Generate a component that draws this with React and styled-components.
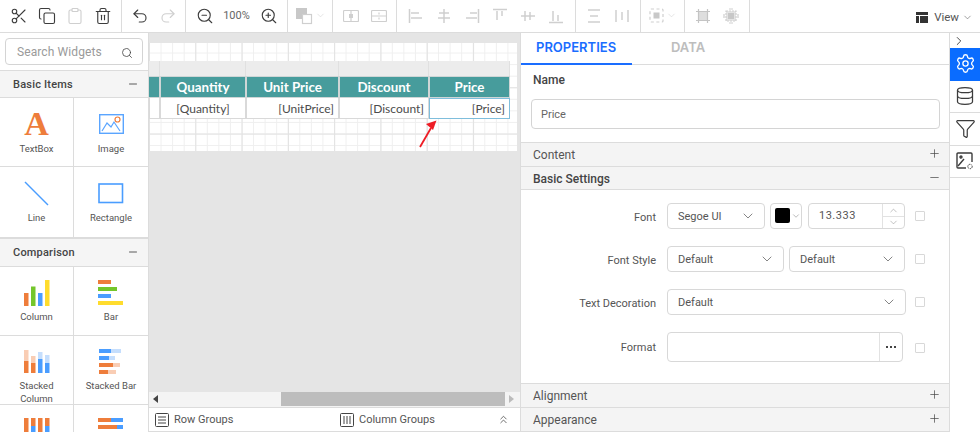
import React from 'react';
import styled, { createGlobalStyle } from 'styled-components';
import { Scissors, Copy, Clipboard, Trash2, Undo2, Redo2, ZoomIn, ZoomOut, Search, Settings, Database, Funnel, ChevronDown, ChevronUp, ChevronRight, ChevronsUp, Plus, Minus } from 'lucide-react';

const Global = createGlobalStyle`
  html, body { margin: 0; padding: 0; background: #fff; overflow: hidden; }
  * { box-sizing: border-box; }
  body { font-family: Roboto, "Liberation Sans", sans-serif; }
`;

const Page = styled.div`
  width: 980px; height: 432px; display: flex; flex-direction: column; overflow: hidden; color: #555;
`;
const Toolbar = styled.div`
  height: 33px; flex: none; display: flex; align-items: stretch; border-bottom: 1px solid #dcdcdc; background: #fff;
`;
const Group = styled.div`
  width: ${p => p.$w}px; flex: none; display: flex; align-items: center; justify-content: center;
  border-right: 1px solid #dcdcdc; padding-bottom: 1px;
`;
const Tool = styled.div`
  width: ${p => p.$w || 28}px; height: 24px; flex: none; display: flex; align-items: center; justify-content: center;
  color: ${p => (p.$off ? '#cfcfcf' : '#3c3c3c')};
`;
const ZoomText = styled.span`
  width: 36px; text-align: center; font-size: 11px; color: #666;
`;
const ViewButton = styled.div`
  margin-left: auto; padding: 2px 7px 0 0; display: flex; align-items: center; gap: 3px; font-size: 11.5px; color: #555;
  svg:first-child { margin-right: 3px; }
`;
const Main = styled.div`
  flex: 1; min-height: 0; display: flex;
`;

/* left panel */
const Widgets = styled.aside`
  width: 149px; flex: none; border-right: 1px solid #dcdcdc; overflow: hidden; background: #fff;
`;
const SearchRow = styled.div`
  height: 38px; padding: 5px 5px 0 5px; border-bottom: 1px solid #dcdcdc;
`;
const SearchBox = styled.div`
  height: 27px; border: 1px solid #d4d4d4; border-radius: 4px; display: flex; align-items: center; justify-content: space-between;
  padding: 0 9px 0 11px; font-size: 12px; color: #9a9a9a; letter-spacing: .1px;
  svg { color: #444; margin-top: 3px; }
`;
const WidgetHead = styled.div`
  height: ${p => p.$h}px; background: #f5f5f5; display: flex; align-items: center; justify-content: space-between;
  padding: 0 9px 0 13px; font-size: 11px; font-weight: 500; color: #444; letter-spacing: .2px;
  border-bottom: 1px solid #dcdcdc;
  svg { color: #333; }
`;
const WidgetGrid = styled.div`
  display: grid; grid-template-columns: 74px 74px; border-bottom: 2px solid #dcdcdc;
`;
const Cell = styled.div`
  height: 69.3px; padding-top: 13px; display: flex; flex-direction: column; align-items: center;
  border-right: 1px solid #dcdcdc; border-bottom: 1px solid #dcdcdc; overflow: hidden;
  &:nth-child(2n) { border-right: 0; }
  &:nth-last-child(-n+2) { border-bottom: 0; }
`;
const CellIcon = styled.div`
  height: 26px; flex: none; display: flex; align-items: center; justify-content: center;
`;
const GlyphA = styled.span`
  font-family: "Liberation Serif", serif; font-weight: 700; font-size: 34px; line-height: 26px; color: #ee7d3b;
`;
const CellLabel = styled.div`
  margin-top: ${p => p.$gap}px; font-size: 9.5px; line-height: 13px; text-align: center; color: #555; width: 60px;
`;

/* canvas */
const Center = styled.section`
  width: 371px; flex: none; display: flex; flex-direction: column; background: #e5e5e5;
`;
const Stage = styled.div`
  flex: 1; min-height: 0; padding: 10px 3px 0 0;
`;
const Paper = styled.div`
  position: relative; height: 108px; padding-top: 18px;
  background-color: #fff;
  background-image:
    linear-gradient(to right, #e2e2e2 1px, transparent 1px),
    linear-gradient(to bottom, #e2e2e2 1px, transparent 1px),
    linear-gradient(to right, #efefef 1px, transparent 1px),
    linear-gradient(to bottom, #efefef 1px, transparent 1px);
  background-size: 46.3px 46.3px, 46.3px 46.3px, 11.575px 11.575px, 11.575px 11.575px;
  background-position: 0 -2px;
`;
const Table = styled.div`
  display: grid; width: 361px; grid-template-columns: 11px 86px 93px 90px 81px; grid-template-rows: 15px 22px 21px;
`;
const Handle = styled.div`
  background: #ececec; border-right: 1px solid #e0e0e0;
`;
const HeadCell = styled.div`
  background: #479c9c; color: #fff; font: 700 13.33px Lato, sans-serif; display: flex; align-items: center; justify-content: center; padding-bottom: 1px;
  border: 1px solid #cfd6d6; border-left-width: ${p => (p.$first ? 0 : 1)}px;
`;
const DataCell = styled.div`
  background: #fff; color: #4c4c4c; font: 400 12px Lato, sans-serif; display: flex; align-items: center; justify-content: ${p => (p.$center ? 'center' : 'flex-end')};
  padding-right: ${p => (p.$center ? 0 : 4)}px; border: 1px solid ${p => (p.$sel ? '#7fbedc' : '#d9d9d9')}; border-width: ${p => (p.$sel ? '1px' : '0 1px 1px 1px')};
`;
const Arrow = styled.svg`
  position: absolute; left: 269px; top: 76px;
`;
const ScrollBar = styled.div`
  height: 15px; flex: none; background: #f4f4f4; display: flex; align-items: center; padding-bottom: 1px;
`;
const ScrollArrow = styled.div`
  width: 13px; flex: none; display: flex; justify-content: center; color: ${p => (p.$off ? '#bbb' : '#444')};
`;
const Thumb = styled.div`
  margin-left: 119px; width: 224px; height: 14px; background: #bdbdbd;
`;
const GroupBar = styled.div`
  height: 25px; flex: none; background: #fff; display: flex; align-items: center; font-size: 11px; color: #555; border-top: 1px solid #dcdcdc; border-bottom: 1px solid #dcdcdc;
`;
const GroupItem = styled.div`
  width: ${p => p.$w}px; padding-left: 6px; display: flex; align-items: center; gap: 5px; flex: none; color: #555;
  svg { color: #444; }
`;
const GroupToggle = styled.div`
  margin-left: auto; padding-right: 10px; display: flex; color: #444;
`;

/* properties */
const Props = styled.section`
  flex: 1; min-width: 0; border-left: 1px solid #dcdcdc; border-bottom: 1px solid #dcdcdc; display: flex; flex-direction: column; background: #fff;
`;
const Tabs = styled.div`
  height: 32px; flex: none; display: flex; border-bottom: 1px solid #dcdcdc;
`;
const Tab = styled.div`
  width: ${p => p.$w}px; height: 32px; padding: 0 0 3px ${p => p.$pad}px; display: flex; align-items: center; font: 600 13px Inter, sans-serif;
  color: ${p => (p.$on ? '#1a6dff' : '#bdbdbd')};
  border-bottom: 2px solid ${p => (p.$on ? '#1a6dff' : 'transparent')};
`;
const NameBlock = styled.div`
  height: 77px; padding: 7px 9px 0 10px; flex: none;
`;
const NameLabel = styled.div`
  font-size: 12px; font-weight: 500; color: #444; line-height: 16px; padding-left: 2px;
`;
const TextInput = styled.div`
  margin-top: 11px; height: 30px; border: 1px solid #d4d4d4; border-radius: 4px; display: flex; align-items: center; padding-left: 9px; font-size: 11px; color: #666;
`;
const SectionHead = styled.div`
  height: 24px; flex: none; background: #f4f4f4; border-top: 1px solid #dcdcdc; border-bottom: 1px solid ${p => (p.$open ? '#dcdcdc' : 'transparent')}; display: flex; align-items: center; justify-content: space-between;
  padding: 2px 8px 0 12px; font-size: 12px; font-weight: ${p => (p.$open ? 500 : 400)}; color: ${p => (p.$open ? '#444' : '#555')};
  svg { color: #444; margin-top: -3px; }
`;
const Form = styled.div`
  flex: 1; min-height: 0; padding-top: 13px; display: flex; flex-direction: column; gap: 17px;
`;
const Row = styled.div`
  display: flex; align-items: center; height: ${p => p.$h || 26}px;
`;
const RowLabel = styled.div`
  width: 135px; flex: none; text-align: right; font-size: 11px; color: #555; margin-right: 11px; padding-top: ${p => p.$nudge || 0}px;
`;
const Fields = styled.div`
  width: 239px; flex: none; display: flex; gap: 5px; height: 100%;
`;
const Select = styled.div`
  width: ${p => p.$w}px; flex: none; height: 100%; border: 1px solid #d8d8d8; border-radius: 4px; display: flex; align-items: center; justify-content: space-between;
  padding: 0 8px 0 10px; font-size: 11px; color: #555;
  svg { color: #666; }
`;
const ColorPick = styled.div`
  width: 32px; flex: none; height: 100%; border: 1px solid #d8d8d8; border-radius: 4px; display: flex; align-items: center; gap: 1px; padding: 0 0 1px 4px; margin-right: 1px;
  svg { color: #777; }
`;
const Swatch = styled.div`
  width: 15px; height: 15px; background: #000; border-radius: 2px; flex: none;
`;
const Spinner = styled.div`
  width: 97px; flex: none; height: 100%; border: 1px solid #d8d8d8; border-radius: 4px; display: flex;
`;
const SpinValue = styled.div`
  flex: 1; display: flex; align-items: center; padding: 0 0 1px 10px; font-size: 11px; color: #555; letter-spacing: .5px;
`;
const SpinButtons = styled.div`
  width: 22px; flex: none; border-left: 1px solid #e2e2e2; display: grid; grid-template-rows: 1fr 1fr;
`;
const SpinButton = styled.div`
  display: flex; align-items: center; justify-content: center; color: #888;
  & + & { border-top: 1px solid #e2e2e2; }
`;
const FormatBox = styled.div`
  width: 236px; flex: none; height: 100%; border: 1px solid #d8d8d8; border-radius: 4px; display: flex; justify-content: flex-end;
`;
const Dots = styled.div`
  width: 23px; border-left: 1px solid #e2e2e2; display: flex; align-items: center; justify-content: center; gap: 2px;
`;
const Dot = styled.i`
  width: 2px; height: 2px; background: #444; display: block;
`;
const Check = styled.div`
  width: 10px; height: 10px; border: 1px solid #d8d8d8; border-radius: 1px; margin-left: 9px; flex: none; margin-top: ${p => p.$mt || 0}px;
`;

/* rail */
const Rail = styled.nav`
  width: 31px; flex: none; border-left: 1px solid #dcdcdc; display: flex; flex-direction: column; background: #fff;
`;
const RailToggle = styled.div`
  height: 15px; padding-left: 2px; display: flex; align-items: center; color: #333;
`;
const RailItem = styled.div`
  height: 32.5px; display: flex; align-items: center; justify-content: center; color: ${p => (p.$on ? '#fff' : '#3c3c3c')};
  background: ${p => (p.$on ? '#0a6cff' : '#fff')};
  border-bottom: 1px solid ${p => (p.$on ? '#0a6cff' : '#dcdcdc')};
`;

const S = ({ w = 18, h = 18, children }) => (
  <svg width={w} height={h} viewBox={`0 0 ${w} ${h}`} fill="none" stroke="currentColor" strokeWidth="1.2">{children}</svg>
);

const IconOrder = () => (
  <S><rect x="1" y="1" width="11" height="11" fill="#c8c8c8" stroke="none" /><rect x="7.5" y="7.5" width="9" height="9" fill="#fff" /></S>
);
const IconMergeH = () => (
  <S w={16} h={14}><rect x="0.5" y="1.5" width="15" height="11" rx="1" /><path d="M8 1v4M8 9v4" /><rect x="6" y="5" width="4" height="4" fill="#cfcfcf" stroke="none" /></S>
);
const IconMergeV = () => (
  <S w={16} h={14}><rect x="0.5" y="1.5" width="15" height="11" rx="1" /><path d="M1 7h14M8 3.5v2M8 8.5v2" /></S>
);
const Al = ({ d }) => <S w={16} h={16}><path d={d} strokeWidth="1.5" /></S>;
const IconGroupSel = () => (
  <S w={15} h={15}><rect x="1" y="1" width="13" height="13" rx="1" strokeDasharray="3 2.5" /><rect x="4.5" y="4.5" width="6" height="6" fill="#c8c8c8" stroke="none" /></S>
);
const IconFitA = () => (
  <S w={16} h={16}><rect x="3" y="3" width="10" height="10" fill="#dedede" stroke="none" /><path d="M3.5 1v14M12.5 1v14M1 3.5h14M1 12.5h14" stroke="#c4c4c4" /></S>
);
const IconFitB = () => (
  <S w={16} h={16}><rect x="3" y="3" width="10" height="10" fill="#e4e4e4" stroke="#cfcfcf" strokeDasharray="2 1" /><rect x="5" y="5" width="6" height="6" fill="#c8c8c8" stroke="none" /><path d="M1 6v4M15 6v4M6 1h4M6 15h4" /></S>
);
const IconView = () => (
  <svg width="12" height="11" viewBox="0 0 12 11"><rect width="12" height="3" fill="#333" /><rect y="4" width="3" height="7" fill="#333" /><rect x="4" y="4" width="8" height="7" fill="#333" /></svg>
);
const IconImage = () => (
  <svg width="25" height="20" viewBox="0 0 25 20" fill="none"><rect x="0.7" y="0.7" width="23.6" height="18.6" stroke="#5aa5ff" strokeWidth="1.4" fill="#fff" /><path d="M3 17l5-8 4 4 3-5 6 9" stroke="#5aa5ff" strokeWidth="1.2" /><circle cx="18.5" cy="5.5" r="2.5" stroke="#ee7d3b" strokeWidth="1.2" /></svg>
);
const IconLine = () => (
  <svg width="26" height="25" viewBox="0 0 26 25"><path d="M1 1l23 23" stroke="#4a9dff" strokeWidth="1.5" /></svg>
);
const IconRect = () => (
  <svg width="26" height="21" viewBox="0 0 26 21"><rect x="1" y="1" width="23.5" height="18.5" fill="#fff" stroke="#4a9dff" strokeWidth="1.6" /></svg>
);
const O = '#ee7d3b', G = '#74c62b', B = '#4a9dff', Y = '#ffdc2d', LO = '#f9cdb4', LB = '#c5defd';
const Bars = ({ items, w = 26, h = 26 }) => (
  <svg width={w} height={h} viewBox={`0 0 ${w} ${h}`}>{items.map((r, i) => <rect key={i} x={r[0]} y={r[1]} width={r[2]} height={r[3]} fill={r[4]} />)}</svg>
);
const colItems = [[0, 13, 4.5, 13, O], [7, 6.5, 4.5, 19.5, G], [14, 13, 4.5, 13, B], [21, 0, 4.5, 26, Y]];
const barItems = [[0, 0, 13, 4, O], [0, 7, 19, 4, G], [0, 14, 13, 4, B], [0, 21, 25, 4, Y]];
const stColItems = [[0, 0, 4.5, 11, LO], [0, 11, 4.5, 12, O], [7, 6, 4.5, 7, LO], [7, 13, 4.5, 10, O], [14, 2, 4.5, 7, LB], [14, 9, 4.5, 14, B], [21, 5, 4.5, 8, LB], [21, 13, 4.5, 10, B]];
const stBarItems = [[1, 0, 12, 4, B], [13, 0, 10, 4, LB], [1, 7, 10, 4, B], [11, 7, 6, 4, LB], [1, 14, 14, 4, O], [15, 14, 7, 4, LO], [1, 21, 9, 4, O], [10, 21, 8, 4, LO]];
const fullColItems = [[0, 0, 4.5, 26, O], [7, 0, 4.5, 8, O], [7, 8, 4.5, 18, B], [14, 0, 4.5, 14, O], [14, 14, 4.5, 12, B], [21, 0, 4.5, 8, O], [21, 8, 4.5, 18, B]];
const fullBarItems = [[0, 0, 13, 4, O], [13, 0, 12, 4, B], [0, 7, 19, 4, O], [19, 7, 6, 4, B], [0, 14, 8, 4, O], [8, 14, 17, 4, B]];

const widgetsA = [
  { label: 'TextBox', icon: <GlyphA>A</GlyphA> },
  { label: 'Image', icon: <IconImage /> },
  { label: 'Line', icon: <IconLine /> },
  { label: 'Rectangle', icon: <IconRect /> },
];
const widgetsB = [
  { label: 'Column', icon: <Bars items={colItems} /> },
  { label: 'Bar', icon: <Bars items={barItems} /> },
  { label: 'Stacked Column', icon: <Bars items={stColItems} h={24} /> },
  { label: 'Stacked Bar', icon: <Bars items={stBarItems} h={25} /> },
  { label: '', icon: <Bars items={fullColItems} /> },
  { label: '', icon: <Bars items={fullBarItems} /> },
];

const Toolbox = ({ items, gap }) => (
  <WidgetGrid>
    {items.map((w, i) => (
      <Cell key={i}>
        <CellIcon>{w.icon}</CellIcon>
        {w.label && <CellLabel $gap={gap}>{w.label}</CellLabel>}
      </Cell>
    ))}
  </WidgetGrid>
);

const Dn = ({ s = 16 }) => <ChevronDown size={s} strokeWidth={1.2} />;

export default function App() {
  const i = { size: 18, strokeWidth: 1.5 };
  return (
    <Page>
      <Global />
      <Toolbar>
        <Group $w={122}>
          <Tool><Scissors {...i} /></Tool>
          <Tool><Copy {...i} /></Tool>
          <Tool $off><Clipboard {...i} /></Tool>
          <Tool><Trash2 {...i} /></Tool>
        </Group>
        <Group $w={64}>
          <Tool><Undo2 {...i} /></Tool>
          <Tool $off><Redo2 {...i} /></Tool>
        </Group>
        <Group $w={102}>
          <Tool><ZoomOut {...i} /></Tool>
          <ZoomText>100%</ZoomText>
          <Tool><ZoomIn {...i} /></Tool>
        </Group>
        <Group $w={45}>
          <Tool $off $w={20}><IconOrder /></Tool>
          <Tool $off $w={12}><ChevronDown size={11} strokeWidth={1.2} /></Tool>
        </Group>
        <Group $w={64}>
          <Tool $off><IconMergeH /></Tool>
          <Tool $off><IconMergeV /></Tool>
        </Group>
        <Group $w={179}>
          <Tool $off><Al d="M1.5 1v14M3 5h8M3 10h11" /></Tool>
          <Tool $off><Al d="M8 1v14M3 5h10M2 10h12" /></Tool>
          <Tool $off><Al d="M14.5 1v14M6 5h7M2 10h11" /></Tool>
          <Tool $off><Al d="M1 1.5h14M5 3v9M10 3v5" /></Tool>
          <Tool $off><Al d="M1 8h14M5 3v10M10 4v8" /></Tool>
          <Tool $off><Al d="M1 14.5h14M5 3v10M10 7v6" /></Tool>
        </Group>
        <Group $w={65}>
          <Tool $off><Al d="M2 2h12M2 14h12M4 8h8" /></Tool>
          <Tool $off><Al d="M2 2v12M14 2v12M8 4v8" /></Tool>
        </Group>
        <Group $w={44}>
          <Tool $off $w={18}><IconGroupSel /></Tool>
          <Tool $off $w={12}><ChevronDown size={11} strokeWidth={1.2} /></Tool>
        </Group>
        <Group $w={65}>
          <Tool $off><IconFitA /></Tool>
          <Tool $off><IconFitB /></Tool>
        </Group>
        <ViewButton><IconView />View<ChevronDown size={11} strokeWidth={1.2} /></ViewButton>
      </Toolbar>
      <Main>
        <Widgets>
          <SearchRow>
            <SearchBox>Search Widgets<Search size={12} strokeWidth={1.6} /></SearchBox>
          </SearchRow>
          <WidgetHead $h={27}>Basic Items<Minus size={12} strokeWidth={1.6} /></WidgetHead>
          <Toolbox items={widgetsA} gap={5} />
          <WidgetHead $h={28}>Comparison<Minus size={12} strokeWidth={1.6} /></WidgetHead>
          <Toolbox items={widgetsB} gap={4} />
        </Widgets>
        <Center>
          <Stage>
            <Paper>
              <Table>
                <Handle /><Handle /><Handle /><Handle /><Handle />
                <HeadCell $first />
                <HeadCell>Quantity</HeadCell>
                <HeadCell>Unit Price</HeadCell>
                <HeadCell>Discount</HeadCell>
                <HeadCell>Price</HeadCell>
                <DataCell />
                <DataCell $center>[Quantity]</DataCell>
                <DataCell>[UnitPrice]</DataCell>
                <DataCell>[Discount]</DataCell>
                <DataCell $sel>[Price]</DataCell>
              </Table>
              <Arrow width="20" height="30" viewBox="0 0 20 30">
                <path d="M2 28L13 9" stroke="#ee1c25" strokeWidth="1.8" fill="none" />
                <path d="M18.5 1.5L8 5l7 6z" fill="#ee1c25" />
              </Arrow>
            </Paper>
          </Stage>
          <ScrollBar>
            <ScrollArrow><svg width="5" height="8"><path d="M5 0v8L0 4z" fill="currentColor" /></svg></ScrollArrow>
            <Thumb />
            <ScrollArrow $off><svg width="5" height="8"><path d="M0 0v8l5-4z" fill="currentColor" /></svg></ScrollArrow>
          </ScrollBar>
          <GroupBar>
            <GroupItem $w={185}>
              <svg width="14" height="14" viewBox="0 0 14 14" fill="none" stroke="currentColor"><rect x=".5" y=".5" width="13" height="13" rx="1" /><path d="M3 4h8M3 7h8M3 10h8" /></svg>
              Row Groups
            </GroupItem>
            <GroupItem $w={150}>
              <svg width="14" height="14" viewBox="0 0 14 14" fill="none" stroke="currentColor"><rect x=".5" y=".5" width="13" height="13" rx="1" /><path d="M4 3v8M7 3v8M10 3v8" /></svg>
              Column Groups
            </GroupItem>
            <GroupToggle><ChevronsUp size={13} strokeWidth={1.4} /></GroupToggle>
          </GroupBar>
        </Center>
        <Props>
          <Tabs>
            <Tab $w={111} $pad={15} $on>PROPERTIES</Tab>
            <Tab $w={100} $pad={39}>DATA</Tab>
          </Tabs>
          <NameBlock>
            <NameLabel>Name</NameLabel>
            <TextInput>Price</TextInput>
          </NameBlock>
          <SectionHead>Content<Plus size={13} strokeWidth={1.3} /></SectionHead>
          <SectionHead $open>Basic Settings<Minus size={13} strokeWidth={1.3} /></SectionHead>
          <Form>
            <Row>
              <RowLabel $nudge={2}>Font</RowLabel>
              <Fields>
                <Select $w={98}>Segoe UI<Dn /></Select>
                <ColorPick><Swatch /><ChevronDown size={10} strokeWidth={1.2} /></ColorPick>
                <Spinner>
                  <SpinValue>13.333</SpinValue>
                  <SpinButtons>
                    <SpinButton><ChevronUp size={11} strokeWidth={1.1} /></SpinButton>
                    <SpinButton><ChevronDown size={11} strokeWidth={1.1} /></SpinButton>
                  </SpinButtons>
                </Spinner>
              </Fields>
              <Check />
            </Row>
            <Row>
              <RowLabel $nudge={2}>Font Style</RowLabel>
              <Fields>
                <Select $w={117}>Default<Dn /></Select>
                <Select $w={116}>Default<Dn /></Select>
              </Fields>
              <Check />
            </Row>
            <Row>
              <RowLabel $nudge={2}>Text Decoration</RowLabel>
              <Fields>
                <Select $w={239}>Default<Dn /></Select>
              </Fields>
              <Check />
            </Row>
            <Row $h={30}>
              <RowLabel>Format</RowLabel>
              <Fields>
                <FormatBox><Dots><Dot /><Dot /><Dot /></Dots></FormatBox>
              </Fields>
              <Check $mt={2} />
            </Row>
          </Form>
          <SectionHead>Alignment<Plus size={13} strokeWidth={1.3} /></SectionHead>
          <SectionHead>Appearance<Plus size={13} strokeWidth={1.3} /></SectionHead>
        </Props>
        <Rail>
          <RailToggle><ChevronRight size={14} strokeWidth={1.5} /></RailToggle>
          <RailItem $on><Settings size={21} strokeWidth={1.5} /></RailItem>
          <RailItem><Database size={20} strokeWidth={1.5} /></RailItem>
          <RailItem><Funnel size={21} strokeWidth={1.4} /></RailItem>
          <RailItem>
            <svg width="18" height="18" viewBox="0 0 18 18" fill="none" stroke="currentColor" strokeWidth="1.4"><path d="M10 16H2a1 1 0 0 1-1-1V2a1 1 0 0 1 1-1h13a1 1 0 0 1 1 1v8" /><path d="M2 14l6-7" /><circle cx="5" cy="5" r="1" /><circle cx="14" cy="14.5" r="2.2" strokeWidth="1" strokeDasharray="1.3 .7" /></svg>
          </RailItem>
        </Rail>
      </Main>
    </Page>
  );
}
